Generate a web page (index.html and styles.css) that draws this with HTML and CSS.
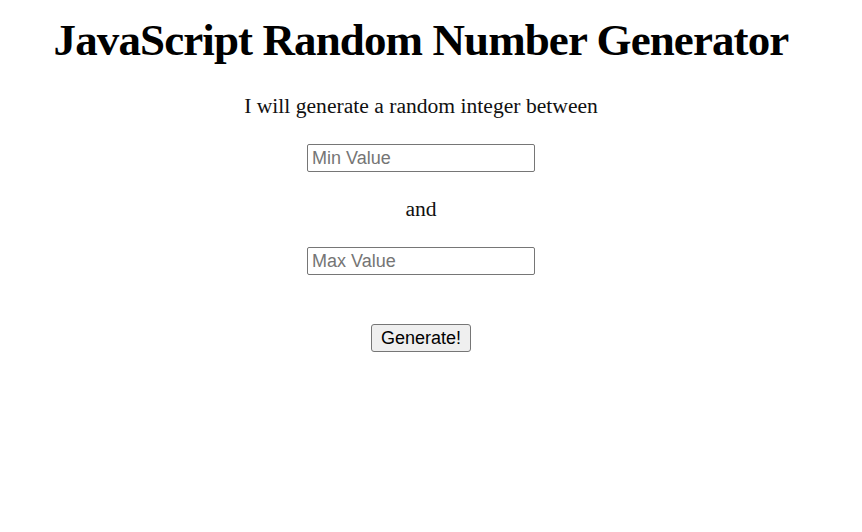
FILE: index.html
```html
<!DOCTYPE html>
<html lang="en">
<head>
  <meta charset="UTF-8" />
  <title>JavaScript Random Number Generator</title>
  <link rel="stylesheet" href="styles.css">
</head>
<body>
  <div class="page">
    <h1>JavaScript Random Number Generator</h1>
    <p class="intro">I will generate a random integer between</p>
    <input type="text" class="field field-min" id="min" placeholder="Min Value" />
    <p class="and">and</p>
    <input type="text" class="field field-max" id="max" placeholder="Max Value" />
    <button class="generate" id="generate">Generate!</button>
    <p class="result" id="result"></p>
  </div>

  <script>
    const min = document.getElementById("min");
    const max = document.getElementById("max");
    const result = document.getElementById("result");

    document.getElementById("generate").addEventListener("click", () => {
      const lo = Math.ceil(Number(min.value));
      const hi = Math.floor(Number(max.value));
      if (isNaN(lo) || isNaN(hi) || min.value === "" || max.value === "") {
        result.textContent = "Please enter two numbers.";
        return;
      }
      result.textContent = Math.floor(Math.random() * (hi - lo + 1)) + lo;
    });
  </script>
</body>
</html>
```

FILE: styles.css
```css
body {
  margin: 0;
  background: #ffffff;
  color: #000000;
  font-family: "Liberation Serif", "Times New Roman", serif;
}

.page {
  width: 842px;
  display: flex;
  flex-direction: column;
  align-items: center;
  text-align: center;
}

h1 {
  font-size: 45px;
  line-height: 52px;
  font-weight: bold;
  letter-spacing: -0.9px;
  margin: 14px 0 0;
}

.intro,
.and {
  font-size: 21.6px;
  line-height: 26px;
  margin: 0;
  color: #111;
}

.intro {
  margin-top: 27px;
}

.and {
  margin-top: 24px;
}

.field {
  box-sizing: border-box;
  width: 228px;
  height: 28px;
  padding: 1px 4px;
  border: 1px solid #767676;
  border-radius: 2px;
  font-family: "Liberation Sans", Arial, sans-serif;
  font-size: 18px;
  color: #000;
}

.field::placeholder {
  color: #757575;
}

.field-min {
  margin-top: 25px;
}

.field-max {
  margin-top: 25px;
}

.generate {
  box-sizing: border-box;
  margin-top: 49px;
  width: 100px;
  height: 28px;
  padding: 0;
  background: #efefef;
  border: 1px solid #767676;
  border-radius: 3px;
  font-family: "Liberation Sans", Arial, sans-serif;
  font-size: 18px;
  color: #000;
  cursor: pointer;
}

.generate:hover {
  background: #e5e5e5;
}

.result {
  font-size: 22px;
  margin: 20px 0 0;
}
```
